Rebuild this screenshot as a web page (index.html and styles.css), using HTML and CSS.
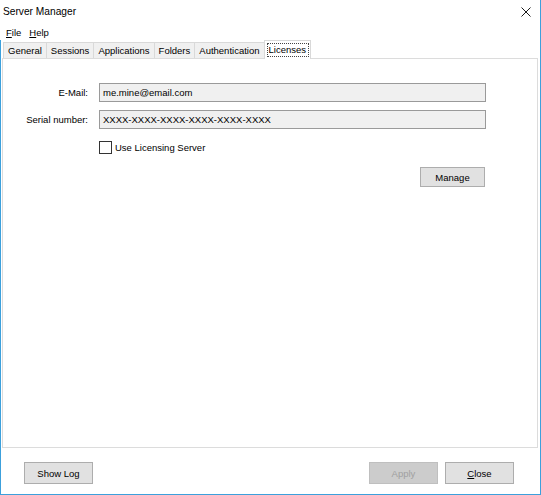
FILE: index.html
```html
<!DOCTYPE html>
<html>
<head>
<meta charset="utf-8">
<title>Server Manager</title>
<link rel="stylesheet" href="styles.css">
</head>
<body>
<div class="window">
  <div class="titlebar">
    <span class="title">Server Manager</span>
    <svg class="close-x" width="10" height="10" viewBox="0 0 10 10"><path d="M0.5 0.5 L9.5 9.5 M9.5 0.5 L0.5 9.5" stroke="#1a1a1a" stroke-width="1" fill="none"/></svg>
  </div>
  <div class="menubar">
    <span class="menu-item"><u>F</u>ile</span>
    <span class="menu-item"><u>H</u>elp</span>
  </div>
  <div class="body">
    <div class="tabstrip">
      <div class="tab first">General</div>
      <div class="tab">Sessions</div>
      <div class="tab">Applications</div>
      <div class="tab">Folders</div>
      <div class="tab">Authentication</div>
      <div class="tab active"><span class="focus">Licenses</span></div>
    </div>
    <div class="panel">
      <div class="form">
        <div class="label">E-Mail:</div>
        <div class="field">me.mine@email.com</div>
        <div class="label row2">Serial number:</div>
        <div class="field row2">XXXX-XXXX-XXXX-XXXX-XXXX-XXXX</div>
        <div class="check-row">
          <span class="checkbox"></span>
          <span class="check-label">Use Licensing Server</span>
        </div>
        <div class="manage-row">
          <button class="btn manage">Manage</button>
        </div>
      </div>
    </div>
    <div class="footer">
      <button class="btn footer-btn">Show Log</button>
      <div class="spacer"></div>
      <button class="btn footer-btn disabled">Apply</button>
      <button class="btn footer-btn"><u>C</u>lose</button>
    </div>
  </div>
</div>
</body>
</html>
```

FILE: styles.css
```css
body {
  margin: 0;
  font-family: "Liberation Sans", Arial, sans-serif;
  font-size: 9.5px;
  color: #000;
  background: #fff;
}

.window {
  width: 541px;
  height: 495px;
  box-sizing: border-box;
  border-right: 1px solid #3ca0dc;
  border-bottom: 1px solid #3ca0dc;
  background: #fff;
  display: flex;
  flex-direction: column;
}

.titlebar {
  height: 23px;
  display: flex;
  align-items: center;
  justify-content: space-between;
  padding: 0 9px 0 3px;
  box-sizing: border-box;
  flex: none;
}

.title {
  font-size: 10.2px;
  color: #000;
}

.close-x {
  display: block;
}

.menubar {
  height: 17px;
  box-sizing: border-box;
  display: flex;
  gap: 8px;
  padding: 3px 0 0 6px;
  line-height: 13px;
  flex: none;
}

.body {
  flex: 1;
  border-left: 1px solid #3ca0dc;
  display: flex;
  flex-direction: column;
}

.tabstrip {
  height: 18px;
  display: flex;
  align-items: flex-end;
  padding-left: 2px;
  flex: none;
}

.tab {
  height: 16px;
  box-sizing: border-box;
  border: 1px solid #d9d9d9;
  border-bottom: none;
  background: #f0f0f0;
  padding: 0 4px;
  line-height: 15px;
  margin-left: -1px;
  white-space: nowrap;
}

.tab.first {
  margin-left: 0;
}

.tab.active {
  height: 19px;
  background: #fff;
  margin-bottom: -1px;
  position: relative;
  z-index: 1;
  padding: 1px 1px 0 2px;
  margin-left: -1px;
}

.focus {
  display: inline-block;
  border: 1px dotted #444;
  padding: 0 2px 0 1px;
  line-height: 12px;
}

.panel {
  height: 390px;
  box-sizing: border-box;
  margin: 0 2px 0 1px;
  border: 1px solid #dcdcdc;
  padding-top: 24px;
  flex: none;
}

.form {
  display: grid;
  grid-template-columns: 85px 387px;
  column-gap: 11px;
  align-items: center;
}

.label {
  text-align: right;
  white-space: nowrap;
}

.field {
  height: 19px;
  box-sizing: border-box;
  border: 1px solid #9a9a9a;
  background: #f0f0f0;
  padding-left: 3px;
  line-height: 17px;
  white-space: nowrap;
}

.row2 {
  margin-top: 8px;
}

.check-row {
  grid-column: 2;
  display: flex;
  align-items: center;
  gap: 3px;
  height: 13px;
  margin-top: 12px;
}

.checkbox {
  width: 13px;
  height: 13px;
  box-sizing: border-box;
  border: 1px solid #333;
  background: #fff;
  flex: none;
}

.manage-row {
  grid-column: 2;
  display: flex;
  justify-content: flex-end;
  margin-top: 13px;
  padding-right: 1px;
}

.btn {
  font-family: inherit;
  font-size: inherit;
  color: #000;
  background: #e1e1e1;
  border: 1px solid #adadad;
  padding: 0;
  margin: 0;
  box-sizing: border-box;
}

.manage {
  width: 65px;
  height: 20px;
}

.footer {
  flex: 1;
  display: flex;
  align-items: flex-start;
  gap: 7px;
  padding: 14px 26px 0 23px;
}

.footer-btn {
  width: 69px;
  height: 22px;
}

.spacer {
  flex: 1;
}

.btn.disabled {
  background: #cccccc;
  border-color: #bfbfbf;
  color: #a0a0a0;
}
```
